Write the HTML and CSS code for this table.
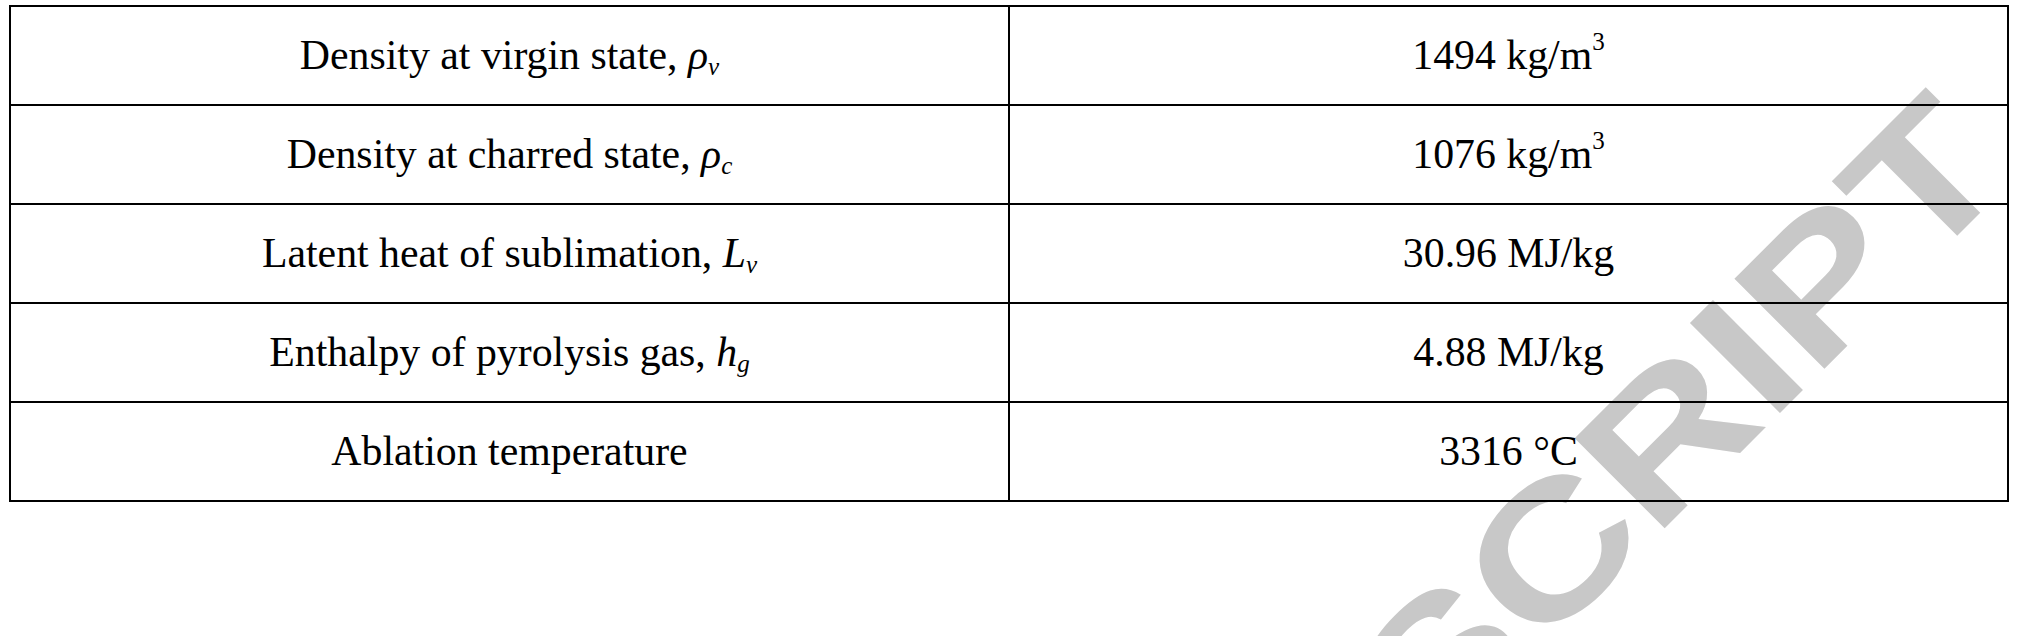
FILE: index.html
```html
<!DOCTYPE html>
<html>
<head>
<meta charset="utf-8">
<link rel="stylesheet" href="styles.css">
</head>
<body>
<div class="page">
  <div class="watermark">ACCEPTED MANUSCRIPT</div>
  <table class="props">
    <tr>
      <td>Density at virgin state, <i>ρ<sub>v</sub></i></td>
      <td>1494 kg/m<sup>3</sup></td>
    </tr>
    <tr>
      <td>Density at charred state, <i>ρ<sub>c</sub></i></td>
      <td>1076 kg/m<sup>3</sup></td>
    </tr>
    <tr>
      <td>Latent heat of sublimation, <i>L<sub>v</sub></i></td>
      <td>30.96 MJ/kg</td>
    </tr>
    <tr>
      <td>Enthalpy of pyrolysis gas, <i>h<sub>g</sub></i></td>
      <td>4.88 MJ/kg</td>
    </tr>
    <tr>
      <td>Ablation temperature</td>
      <td>3316 °C</td>
    </tr>
  </table>
</div>
</body>
</html>
```

FILE: styles.css
```css
html, body {
  margin: 0;
  padding: 0;
  background: #ffffff;
}

.page {
  position: relative;
  width: 2033px;
  height: 636px;
  overflow: hidden;
  padding: 5px 0 0 9px;
  box-sizing: border-box;
  font-family: "Liberation Serif", "Times New Roman", serif;
  color: #000;
}

.watermark {
  position: absolute;
  left: 2018px;
  top: 176px;
  transform-origin: 0 0;
  transform: rotate(-45deg) scaleX(1.22) translate(-100%, -0.8465em);
  font-family: "Liberation Sans", Arial, sans-serif;
  font-weight: bold;
  font-size: 185px;
  line-height: 1;
  white-space: nowrap;
  color: #c8c8c8;
  z-index: 0;
}

.props {
  position: relative;
  z-index: 1;
  width: 2000px;
  border-collapse: collapse;
  table-layout: fixed;
  font-size: 41.8px;
}

.props td {
  border: 2px solid #000;
  height: 97px;
  padding: 0;
  text-align: center;
  vertical-align: middle;
  line-height: 1;
  width: 50%;
}

.props sup {
  font-size: 0.6em;
  vertical-align: 0.75em;
  line-height: 0;
}

.props sub {
  font-size: 0.6em;
  vertical-align: -0.25em;
  line-height: 0;
}
```
